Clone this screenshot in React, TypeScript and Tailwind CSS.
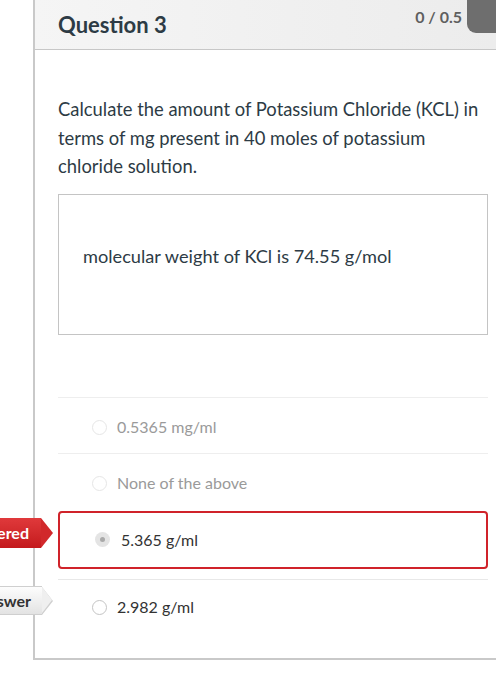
// Quiz result card: question header, prompt, hint box and answer options

import React from 'react';

type Option = {
  label: string;
  state: 'faded' | 'selected' | 'normal';
};

const options: Option[] = [
  { label: '0.5365 mg/ml', state: 'faded' },
  { label: 'None of the above', state: 'faded' },
  { label: '5.365 g/ml', state: 'selected' },
  { label: '2.982 g/ml', state: 'normal' },
];

function Radio({ state }: { state: Option['state'] }) {
  if (state === 'selected') {
    return (
      <span className="flex h-[15px] w-[15px] items-center justify-center rounded-full bg-[#e4e4e4]">
        <span className="h-[5px] w-[5px] rounded-full bg-[#a9a9a9]" />
      </span>
    );
  }
  return (
    <span
      className={
        state === 'faded'
          ? 'h-[15px] w-[15px] rounded-full border border-[#e6e6e6] bg-white'
          : 'h-[15px] w-[15px] rounded-full border border-[#c4c4c4] bg-white'
      }
    />
  );
}

export default function App() {
  return (
    <div className="relative h-[700px] w-[496px] overflow-hidden bg-white font-['Lato','Liberation_Sans',sans-serif] text-[#2d3b45]">
      {/* Карточка вопроса */}
      <div className="ml-[33px] h-[660px] border-b-2 border-l-2 border-[#c9c9c9]">
        {/* Заголовок */}
        <div className="relative flex h-[50px] items-center border-b border-[#c7c7c7] bg-gradient-to-r from-[#f5f5f5] to-[#ececec] pl-[23px]">
          <h2 className="text-[22px] font-bold leading-none text-[#2d3b45]">Question 3</h2>
          <span className="absolute right-[34px] top-[5px] text-[16px] font-bold text-[#5f5f5f]">0 / 0.5</span>
          <span className="absolute right-0 top-0 h-[33px] w-[29px] rounded-bl-[9px] bg-[#6e6e6e]" />
        </div>

        {/* Текст вопроса */}
        <div className="pl-[23px] pt-[45px]">
          <p className="w-[428px] text-[18.4px] leading-[28.5px] text-[#2d3b45]">
            Calculate the amount of Potassium Chloride (KCL) in terms of mg present in 40 moles of potassium chloride solution.
          </p>

          <div className="mt-[13px] h-[141px] w-[430px] border border-[#c4c4c4] pl-[24px] pt-[49px]">
            <p className="text-[18.2px] leading-[24px] text-[#2d3b45]">molecular weight of KCl is 74.55 g/mol</p>
          </div>

          {/* Варианты ответа */}
          <div className="mt-[62px] w-[430px]">
            {options.map((opt) =>
              opt.state === 'selected' ? (
                <div
                  key={opt.label}
                  className="mb-[10px] mt-[2px] flex h-[58px] items-center gap-[11px] rounded-[4px] border-2 border-[#d0232a] pl-[35px]"
                >
                  <Radio state={opt.state} />
                  <span className="text-[16px] text-[#333]">{opt.label}</span>
                </div>
              ) : (
                <div
                  key={opt.label}
                  className={
                    opt.label === '2.982 g/ml'
                      ? 'flex h-[56px] items-center gap-[10px] border-t border-[#e8e8e8] pl-[34px]'
                      : 'flex h-[56px] items-center gap-[10px] border-t border-[#eeeeee] pl-[34px] pt-[4px]'
                  }
                >
                  <Radio state={opt.state} />
                  <span className={opt.state === 'faded' ? 'text-[16px] text-[#9a9a9a]' : 'text-[16px] text-[#333]'}>
                    {opt.label}
                  </span>
                </div>
              )
            )}
          </div>
        </div>
      </div>

      {/* Метка "You Answered" */}
      <div className="absolute right-[443px] top-[518px] flex h-[30px] items-center">
        <div className="flex h-full items-center whitespace-nowrap rounded-l-[3px] bg-gradient-to-b from-[#e0393b] to-[#c4181c] pl-2 pr-[12px] text-[16px] font-bold text-white">
          You Answered
        </div>
        <div className="h-0 w-0 border-y-[15px] border-l-[12px] border-y-transparent border-l-[#d1282b]" />
      </div>

      {/* Метка "Correct Answer" */}
      <div className="absolute right-[443px] top-[586px] flex h-[29px] items-center">
        <div className="flex h-full items-center whitespace-nowrap border-y border-[#cfcfcf] bg-gradient-to-b from-[#fdfdfd] to-[#e3e3e3] pl-2 pr-[11px] text-[16px] font-bold text-[#333]">
          Correct Answer
        </div>
        <div className="relative h-0 w-0 border-y-[14.5px] border-l-[11px] border-y-transparent border-l-[#cfcfcf]">
          <div className="absolute -left-[11px] -top-[13.5px] h-0 w-0 border-y-[13.5px] border-l-[10px] border-y-transparent border-l-[#efefef]" />
        </div>
      </div>
    </div>
  );
}
